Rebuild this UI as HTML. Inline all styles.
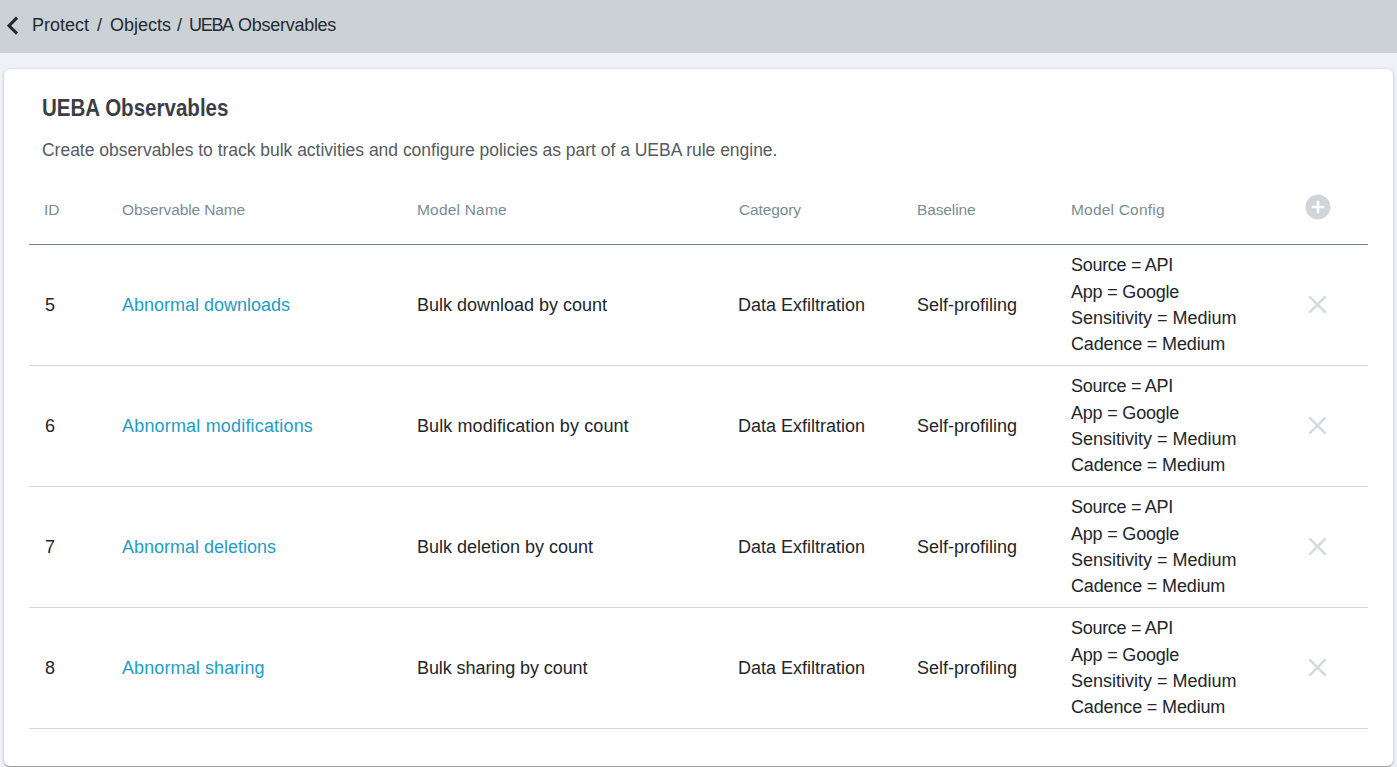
<!DOCTYPE html>
<html>
<head>
<meta charset="utf-8">
<style>
html, body { margin:0; padding:0; }
body { width:1397px; height:767px; overflow:hidden; background:#eff0f8; font-family:"Liberation Sans", sans-serif; position:relative; }
.abs { position:absolute; white-space:nowrap; }
.topbar { position:absolute; left:0; top:0; width:1397px; height:53px; background:#cbd1d4; }
.crumb { top:14px; font-size:18px; line-height:22px; color:#222b33; }
.cr2 { letter-spacing:-0.45px; }
.card { position:absolute; left:4px; top:69px; width:1389px; height:697px; background:#fff; border-radius:6px; box-shadow:0 1px 3px 0 rgba(0,0,0,0.2), 0 1px 1px 0 rgba(0,0,0,0.14), 0 2px 1px -1px rgba(0,0,0,0.12), 0 0 2px 1px rgba(40,40,70,0.04); }
.title { left:42px; top:95px; font-size:23.5px; line-height:26px; font-weight:bold; color:#3b3e46; transform-origin:0 0; transform:scaleX(0.874); }
.desc { left:42px; top:140px; font-size:17.5px; line-height:20px; color:#565a62; letter-spacing:-0.02px; }
.th { top:200.6px; font-size:15.5px; line-height:18px; color:#7a8c98; letter-spacing:-0.12px; }
.hline { position:absolute; left:29px; width:1339px; height:1px; }
.rl { background:#d3dadd; }
.td { font-size:18px; line-height:22px; color:#22262b; }
.link { color:#1f9cc6; }
.cfg { font-size:18px; line-height:26.33px; color:#22262b; }

</style>
</head>
<body>
<div class="topbar"></div>
<svg class="abs" style="left:0;top:0" width="30" height="53" viewBox="0 0 30 53"><path transform="translate(-5.3 7.4) scale(1.52)" fill="#20272e" d="M15.41 7.41L14 6l-6 6 6 6 1.41-1.41L10.83 12z"/></svg>
<div class="abs crumb" style="left:32px">Protect</div>
<div class="abs crumb" style="left:97px">/</div>
<div class="abs crumb" style="left:110px">Objects</div>
<div class="abs crumb" style="left:177px">/</div>
<div class="abs crumb" style="left:189px;letter-spacing:-1.3px">UEBA</div>
<div class="abs crumb" style="left:238px;letter-spacing:-0.27px">Observables</div>

<div class="card"></div>
<div class="abs title">UEBA Observables</div>
<div class="abs desc">Create observables to track bulk activities and configure policies as part of a UEBA rule engine.</div>

<div class="abs th" style="left:44px">ID</div>
<div class="abs th" style="left:122px">Observable Name</div>
<div class="abs th" style="left:417px;letter-spacing:0.2px">Model Name</div>
<div class="abs th" style="left:739px">Category</div>
<div class="abs th" style="left:917px">Baseline</div>
<div class="abs th" style="left:1071px;letter-spacing:0.2px">Model Config</div>
<svg class="abs" style="left:1303px;top:192px" width="30" height="30" viewBox="0 0 24 24"><path fill="#cfd6db" d="M12 2C6.48 2 2 6.48 2 12s4.48 10 10 10 10-4.48 10-10S17.52 2 12 2zm5 11h-4v4h-2v-4H7v-2h4V7h2v4h4v2z"/></svg>
<div class="hline" style="top:244px;background:#6f8593"></div>

<div class="abs td" style="left:45px;top:294px">5</div>
<div class="abs td link" style="left:122px;top:294px;letter-spacing:0px">Abnormal downloads</div>
<div class="abs td" style="left:417px;top:294px;letter-spacing:0px">Bulk download by count</div>
<div class="abs td" style="left:738px;top:294px">Data Exfiltration</div>
<div class="abs td" style="left:917px;top:294px">Self-profiling</div>
<div class="abs cfg" style="left:1071px;top:252.4px"><span style="letter-spacing:-0.3px">Source = API</span><br><span style="letter-spacing:-0.2px">App = Google</span><br>Sensitivity = Medium<br><span style="letter-spacing:-0.15px">Cadence = Medium</span></div>
<svg class="abs" style="left:1302.4px;top:289.3px" width="31" height="31" viewBox="0 0 24 24"><path fill="#d3dbdf" d="M19 6.41L17.59 5 12 10.59 6.41 5 5 6.41 10.59 12 5 17.59 6.41 19 12 13.41 17.59 19 19 17.59 13.41 12z"/></svg>
<div class="hline rl" style="top:365px"></div>
<div class="abs td" style="left:45px;top:415px">6</div>
<div class="abs td link" style="left:122px;top:415px;letter-spacing:0.18px">Abnormal modifications</div>
<div class="abs td" style="left:417px;top:415px;letter-spacing:0.1px">Bulk modification by count</div>
<div class="abs td" style="left:738px;top:415px">Data Exfiltration</div>
<div class="abs td" style="left:917px;top:415px">Self-profiling</div>
<div class="abs cfg" style="left:1071px;top:373.4px"><span style="letter-spacing:-0.3px">Source = API</span><br><span style="letter-spacing:-0.2px">App = Google</span><br>Sensitivity = Medium<br><span style="letter-spacing:-0.15px">Cadence = Medium</span></div>
<svg class="abs" style="left:1302.4px;top:410.3px" width="31" height="31" viewBox="0 0 24 24"><path fill="#d3dbdf" d="M19 6.41L17.59 5 12 10.59 6.41 5 5 6.41 10.59 12 5 17.59 6.41 19 12 13.41 17.59 19 19 17.59 13.41 12z"/></svg>
<div class="hline rl" style="top:486px"></div>
<div class="abs td" style="left:45px;top:536px">7</div>
<div class="abs td link" style="left:122px;top:536px;letter-spacing:0px">Abnormal deletions</div>
<div class="abs td" style="left:417px;top:536px;letter-spacing:0px">Bulk deletion by count</div>
<div class="abs td" style="left:738px;top:536px">Data Exfiltration</div>
<div class="abs td" style="left:917px;top:536px">Self-profiling</div>
<div class="abs cfg" style="left:1071px;top:494.4px"><span style="letter-spacing:-0.3px">Source = API</span><br><span style="letter-spacing:-0.2px">App = Google</span><br>Sensitivity = Medium<br><span style="letter-spacing:-0.15px">Cadence = Medium</span></div>
<svg class="abs" style="left:1302.4px;top:531.3px" width="31" height="31" viewBox="0 0 24 24"><path fill="#d3dbdf" d="M19 6.41L17.59 5 12 10.59 6.41 5 5 6.41 10.59 12 5 17.59 6.41 19 12 13.41 17.59 19 19 17.59 13.41 12z"/></svg>
<div class="hline rl" style="top:607px"></div>
<div class="abs td" style="left:45px;top:657px">8</div>
<div class="abs td link" style="left:122px;top:657px;letter-spacing:0.1px">Abnormal sharing</div>
<div class="abs td" style="left:417px;top:657px;letter-spacing:-0.08px">Bulk sharing by count</div>
<div class="abs td" style="left:738px;top:657px">Data Exfiltration</div>
<div class="abs td" style="left:917px;top:657px">Self-profiling</div>
<div class="abs cfg" style="left:1071px;top:615.4px"><span style="letter-spacing:-0.3px">Source = API</span><br><span style="letter-spacing:-0.2px">App = Google</span><br>Sensitivity = Medium<br><span style="letter-spacing:-0.15px">Cadence = Medium</span></div>
<svg class="abs" style="left:1302.4px;top:652.3px" width="31" height="31" viewBox="0 0 24 24"><path fill="#d3dbdf" d="M19 6.41L17.59 5 12 10.59 6.41 5 5 6.41 10.59 12 5 17.59 6.41 19 12 13.41 17.59 19 19 17.59 13.41 12z"/></svg>
<div class="hline rl" style="top:728px"></div>
</body>
</html>
